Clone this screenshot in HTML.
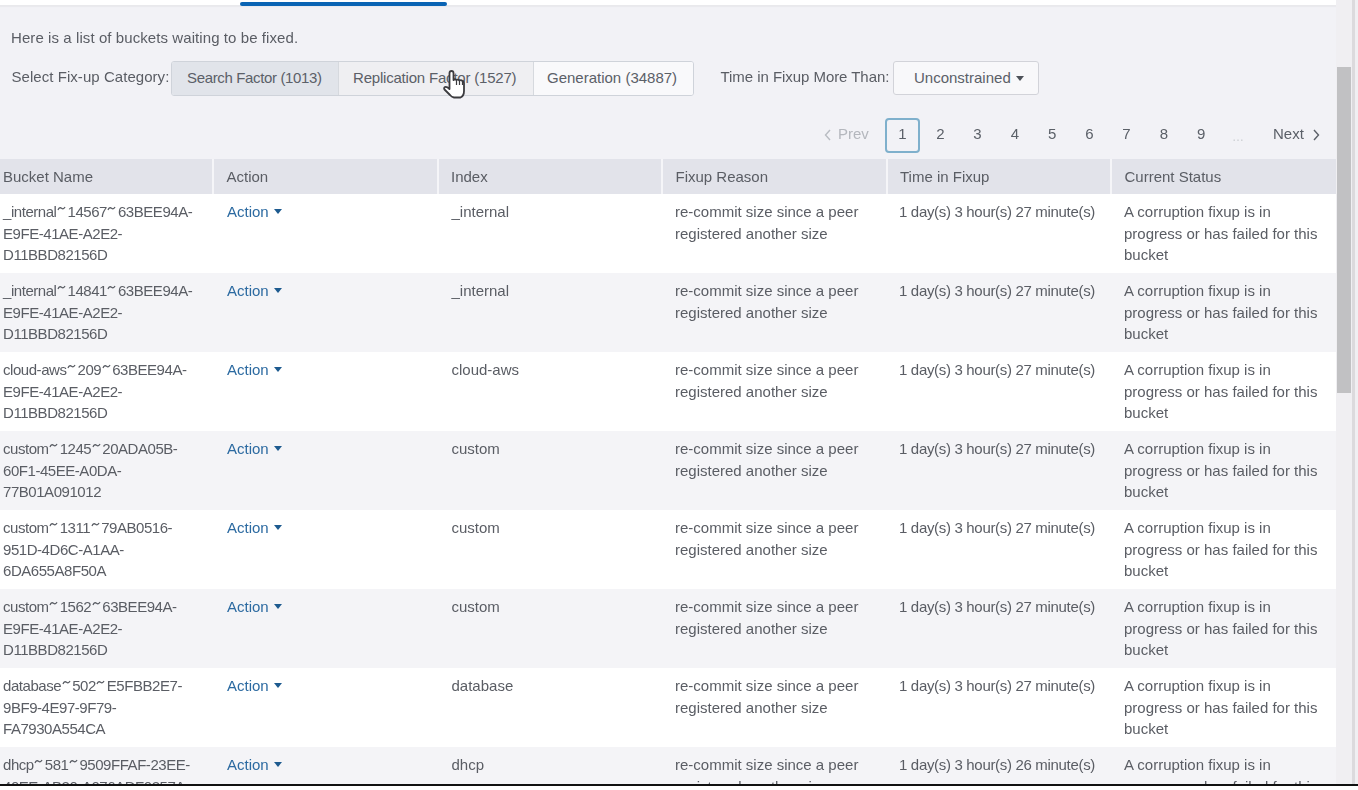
<!DOCTYPE html>
<html><head><meta charset="utf-8">
<style>
*{box-sizing:border-box;margin:0;padding:0}
html,body{width:1358px;height:790px;overflow:hidden;background:#f2f2f6;font-family:"Liberation Sans",sans-serif;color:#5a5d64;font-size:15px}
.abs{position:absolute;white-space:nowrap}
#wrap{position:absolute;left:0;top:0;width:1358px;height:790px;overflow:hidden;filter:blur(0.35px)}
#topstrip{position:absolute;left:0;top:0;width:1336px;height:5.5px;background:#fff;border-bottom:1px solid #e9e9ec;box-shadow:0 1px 1px rgba(0,0,0,0.03)}
#tabbar{position:absolute;left:240px;top:1.5px;width:207px;height:4px;background:#0a64b4;border-radius:2px}
#sb{position:absolute;left:1336px;top:0;width:22px;height:785px;background:#f0eff2}
#sbthumb{position:absolute;left:1px;top:67px;width:14px;height:326px;background:#c1c1c3}
#sbline{position:absolute;left:16px;top:0;width:3px;height:785px;background:#dcdadd}
#bottom{position:absolute;left:0;top:784px;width:1358px;height:6px;background:#fff;border-top:2px solid #111}
.btngrp{position:absolute;left:171px;top:61px;height:35px;border:1px solid #cfd3da;border-radius:3px;display:flex;overflow:hidden}
.btn{height:33px;line-height:31px;white-space:nowrap;font-size:15px;color:#5b6068}
.dd{position:absolute;left:893px;top:61px;width:146px;height:34px;border:1px solid #d2d3d9;border-radius:3px;background:#f8f8fa;line-height:32px;padding-left:20px;color:#5b6068}
.ddcar{position:absolute;left:122px;top:14px;width:0;height:0;border-left:4px solid transparent;border-right:4px solid transparent;border-top:5px solid #4d5158}
.pg{position:absolute;top:118px;height:35px;line-height:32px;text-align:center;color:#5b6068}
table{position:absolute;left:-11px;top:159px;border-collapse:collapse;table-layout:fixed;width:1347px}
th{height:35px;background:#e2e3ea;font-weight:normal;text-align:left;padding:0 0 0 12.5px;border-left:2px solid #f5f5f8;color:#5a5d64}
th:first-child{border-left:none;padding-left:14px}
td{height:79px;vertical-align:top;padding:7px 0 0 14px;line-height:21.6px;color:#5a5d64}
td.c1{letter-spacing:-0.45px}
.tl{display:inline-block;margin:0 1.5px 0 0.5px;vertical-align:top;position:relative;top:5px}
td.c5{letter-spacing:-0.32px;padding-left:12.5px}
td.c4,td.c6{padding-left:13px}
tr.o td{background:#fff}
tr.e td{background:#f4f4f7}
a{color:#2c6aa1;text-decoration:none}
.car{display:inline-block;width:0;height:0;border-left:4px solid transparent;border-right:4px solid transparent;border-top:5px solid #1d5a8f;vertical-align:middle;margin-left:1px;position:relative;top:-2px}
</style></head><body>
<div id="wrap"><div id="topstrip"></div><div id="tabbar"></div>
<div class="abs" style="left:11px;top:29px;line-height:18px;letter-spacing:0.08px">Here is a list of buckets waiting to be fixed.</div>
<div class="abs" style="left:11.5px;top:68px;line-height:18px;letter-spacing:0.05px">Select Fix-up Category:</div>
<div class="btngrp">
 <div class="btn" style="width:166px;background:#e1e4ea;padding-left:15px;letter-spacing:-0.35px">Search Factor (1013)</div>
 <div class="btn" style="width:195px;background:#efeff2;border-left:1px solid #d6d9de;padding-left:14px;letter-spacing:-0.2px">Replication Factor (1527)</div>
 <div class="btn" style="width:160px;background:#f9f9fb;border-left:1px solid #d6d9de;padding-left:13px">Generation (34887)</div>
</div>
<div class="abs" style="left:720.5px;top:68px;line-height:18px;letter-spacing:-0.05px">Time in Fixup More Than:</div>
<div class="dd">Unconstrained<span class="ddcar"></span></div>
<div class="pg" style="left:820px;width:52px;color:#b4b7bd;text-align:left;padding-left:18px"><svg width="8" height="12" viewBox="0 0 8 12" style="position:absolute;left:4px;top:11px"><path d="M6 1 L1.5 6 L6 11" fill="none" stroke="#b9bcc2" stroke-width="1.4"/></svg>Prev</div>
<div class="pg" style="left:885px;width:35px;border:2px solid #7fb0cc;border-radius:4px;line-height:28px">1</div>
<div class="pg" style="left:922.8px;width:35px">2</div>
<div class="pg" style="left:960.0px;width:35px">3</div>
<div class="pg" style="left:997.3px;width:35px">4</div>
<div class="pg" style="left:1034.6px;width:35px">5</div>
<div class="pg" style="left:1072.0px;width:35px">6</div>
<div class="pg" style="left:1108.9px;width:35px">7</div>
<div class="pg" style="left:1146.3px;width:35px">8</div>
<div class="pg" style="left:1183.7px;width:35px">9</div>
<div class="pg" style="left:1220px;width:36px;color:#c9ccd0;font-size:12px;line-height:38px">&hellip;</div>
<div class="pg" style="left:1273px;width:50px;text-align:left">Next<svg width="8" height="12" viewBox="0 0 8 12" style="position:absolute;left:39px;top:11px"><path d="M2 1 L6.5 6 L2 11" fill="none" stroke="#5b6068" stroke-width="1.4"/></svg></div>
<table><colgroup><col style="width:224px"><col style="width:224.5px"><col style="width:224.5px"><col style="width:224.5px"><col style="width:224.5px"><col style="width:225px"></colgroup>
<tr><th>Bucket Name</th><th>Action</th><th>Index</th><th>Fixup Reason</th><th>Time in Fixup</th><th>Current Status</th></tr>
<tr class="o"><td class="c1">_internal<svg class="tl" width="9" height="5" viewBox="0 0 9 5"><path d="M1 4 Q2.5 0.8 4.5 2.2 Q6.5 3.8 8 1" fill="none" stroke="#5a5d64" stroke-width="1.3"/></svg>14567<svg class="tl" width="9" height="5" viewBox="0 0 9 5"><path d="M1 4 Q2.5 0.8 4.5 2.2 Q6.5 3.8 8 1" fill="none" stroke="#5a5d64" stroke-width="1.3"/></svg>63BEE94A-<br>E9FE-41AE-A2E2-<br>D11BBD82156D</td><td><a>Action<span class="car" style="margin-left:5px"></span></a></td><td>_internal</td><td class="c4">re-commit size since a peer<br>registered another size</td><td class="c5">1 day(s) 3 hour(s) 27 minute(s)</td><td class="c6">A corruption fixup is in<br>progress or has failed for this<br>bucket</td></tr>
<tr class="e"><td class="c1">_internal<svg class="tl" width="9" height="5" viewBox="0 0 9 5"><path d="M1 4 Q2.5 0.8 4.5 2.2 Q6.5 3.8 8 1" fill="none" stroke="#5a5d64" stroke-width="1.3"/></svg>14841<svg class="tl" width="9" height="5" viewBox="0 0 9 5"><path d="M1 4 Q2.5 0.8 4.5 2.2 Q6.5 3.8 8 1" fill="none" stroke="#5a5d64" stroke-width="1.3"/></svg>63BEE94A-<br>E9FE-41AE-A2E2-<br>D11BBD82156D</td><td><a>Action<span class="car" style="margin-left:5px"></span></a></td><td>_internal</td><td class="c4">re-commit size since a peer<br>registered another size</td><td class="c5">1 day(s) 3 hour(s) 27 minute(s)</td><td class="c6">A corruption fixup is in<br>progress or has failed for this<br>bucket</td></tr>
<tr class="o"><td class="c1">cloud-aws<svg class="tl" width="9" height="5" viewBox="0 0 9 5"><path d="M1 4 Q2.5 0.8 4.5 2.2 Q6.5 3.8 8 1" fill="none" stroke="#5a5d64" stroke-width="1.3"/></svg>209<svg class="tl" width="9" height="5" viewBox="0 0 9 5"><path d="M1 4 Q2.5 0.8 4.5 2.2 Q6.5 3.8 8 1" fill="none" stroke="#5a5d64" stroke-width="1.3"/></svg>63BEE94A-<br>E9FE-41AE-A2E2-<br>D11BBD82156D</td><td><a>Action<span class="car" style="margin-left:5px"></span></a></td><td>cloud-aws</td><td class="c4">re-commit size since a peer<br>registered another size</td><td class="c5">1 day(s) 3 hour(s) 27 minute(s)</td><td class="c6">A corruption fixup is in<br>progress or has failed for this<br>bucket</td></tr>
<tr class="e"><td class="c1">custom<svg class="tl" width="9" height="5" viewBox="0 0 9 5"><path d="M1 4 Q2.5 0.8 4.5 2.2 Q6.5 3.8 8 1" fill="none" stroke="#5a5d64" stroke-width="1.3"/></svg>1245<svg class="tl" width="9" height="5" viewBox="0 0 9 5"><path d="M1 4 Q2.5 0.8 4.5 2.2 Q6.5 3.8 8 1" fill="none" stroke="#5a5d64" stroke-width="1.3"/></svg>20ADA05B-<br>60F1-45EE-A0DA-<br>77B01A091012</td><td><a>Action<span class="car" style="margin-left:5px"></span></a></td><td>custom</td><td class="c4">re-commit size since a peer<br>registered another size</td><td class="c5">1 day(s) 3 hour(s) 27 minute(s)</td><td class="c6">A corruption fixup is in<br>progress or has failed for this<br>bucket</td></tr>
<tr class="o"><td class="c1">custom<svg class="tl" width="9" height="5" viewBox="0 0 9 5"><path d="M1 4 Q2.5 0.8 4.5 2.2 Q6.5 3.8 8 1" fill="none" stroke="#5a5d64" stroke-width="1.3"/></svg>1311<svg class="tl" width="9" height="5" viewBox="0 0 9 5"><path d="M1 4 Q2.5 0.8 4.5 2.2 Q6.5 3.8 8 1" fill="none" stroke="#5a5d64" stroke-width="1.3"/></svg>79AB0516-<br>951D-4D6C-A1AA-<br>6DA655A8F50A</td><td><a>Action<span class="car" style="margin-left:5px"></span></a></td><td>custom</td><td class="c4">re-commit size since a peer<br>registered another size</td><td class="c5">1 day(s) 3 hour(s) 27 minute(s)</td><td class="c6">A corruption fixup is in<br>progress or has failed for this<br>bucket</td></tr>
<tr class="e"><td class="c1">custom<svg class="tl" width="9" height="5" viewBox="0 0 9 5"><path d="M1 4 Q2.5 0.8 4.5 2.2 Q6.5 3.8 8 1" fill="none" stroke="#5a5d64" stroke-width="1.3"/></svg>1562<svg class="tl" width="9" height="5" viewBox="0 0 9 5"><path d="M1 4 Q2.5 0.8 4.5 2.2 Q6.5 3.8 8 1" fill="none" stroke="#5a5d64" stroke-width="1.3"/></svg>63BEE94A-<br>E9FE-41AE-A2E2-<br>D11BBD82156D</td><td><a>Action<span class="car" style="margin-left:5px"></span></a></td><td>custom</td><td class="c4">re-commit size since a peer<br>registered another size</td><td class="c5">1 day(s) 3 hour(s) 27 minute(s)</td><td class="c6">A corruption fixup is in<br>progress or has failed for this<br>bucket</td></tr>
<tr class="o"><td class="c1">database<svg class="tl" width="9" height="5" viewBox="0 0 9 5"><path d="M1 4 Q2.5 0.8 4.5 2.2 Q6.5 3.8 8 1" fill="none" stroke="#5a5d64" stroke-width="1.3"/></svg>502<svg class="tl" width="9" height="5" viewBox="0 0 9 5"><path d="M1 4 Q2.5 0.8 4.5 2.2 Q6.5 3.8 8 1" fill="none" stroke="#5a5d64" stroke-width="1.3"/></svg>E5FBB2E7-<br>9BF9-4E97-9F79-<br>FA7930A554CA</td><td><a>Action<span class="car" style="margin-left:5px"></span></a></td><td>database</td><td class="c4">re-commit size since a peer<br>registered another size</td><td class="c5">1 day(s) 3 hour(s) 27 minute(s)</td><td class="c6">A corruption fixup is in<br>progress or has failed for this<br>bucket</td></tr>
<tr class="e"><td class="c1">dhcp<svg class="tl" width="9" height="5" viewBox="0 0 9 5"><path d="M1 4 Q2.5 0.8 4.5 2.2 Q6.5 3.8 8 1" fill="none" stroke="#5a5d64" stroke-width="1.3"/></svg>581<svg class="tl" width="9" height="5" viewBox="0 0 9 5"><path d="M1 4 Q2.5 0.8 4.5 2.2 Q6.5 3.8 8 1" fill="none" stroke="#5a5d64" stroke-width="1.3"/></svg>9509FFAF-23EE-<br>40EE-AB20-A076ADF0257A</td><td><a>Action<span class="car" style="margin-left:5px"></span></a></td><td>dhcp</td><td class="c4">re-commit size since a peer<br>registered another size</td><td class="c5">1 day(s) 3 hour(s) 26 minute(s)</td><td class="c6">A corruption fixup is in<br>progress or has failed for this<br>bucket</td></tr>
</table>
<svg width="26" height="32" viewBox="0 0 26 32" style="position:absolute;left:442px;top:69px">
<path d="M7.5 18 L7.5 4 Q7.5 2 9.5 2 Q11.5 2 11.5 4 L11.5 11 Q13 9.5 14.5 11 Q16 10 17.5 11.5 Q19 10.5 20.5 12 Q22 12 22 14 L22 22 Q22 27 18.5 28.5 L12 28.5 Q9.5 28 8 26 L2.5 20.5 Q1.5 19 3 18 Q5 17.5 7.5 20 Z" fill="#fff" stroke="#3b3b3f" stroke-width="1.8" stroke-linejoin="round"/>
<path d="M14.5 11.5 L14.5 16 M17.5 12 L17.5 16 M20.5 12.5 L20.5 16" stroke="#3b3b3f" stroke-width="1.2"/>
</svg>
<div id="sb"><div id="sbthumb"></div><div id="sbline"></div></div>
<div id="bottom"></div></div>
</body></html>
